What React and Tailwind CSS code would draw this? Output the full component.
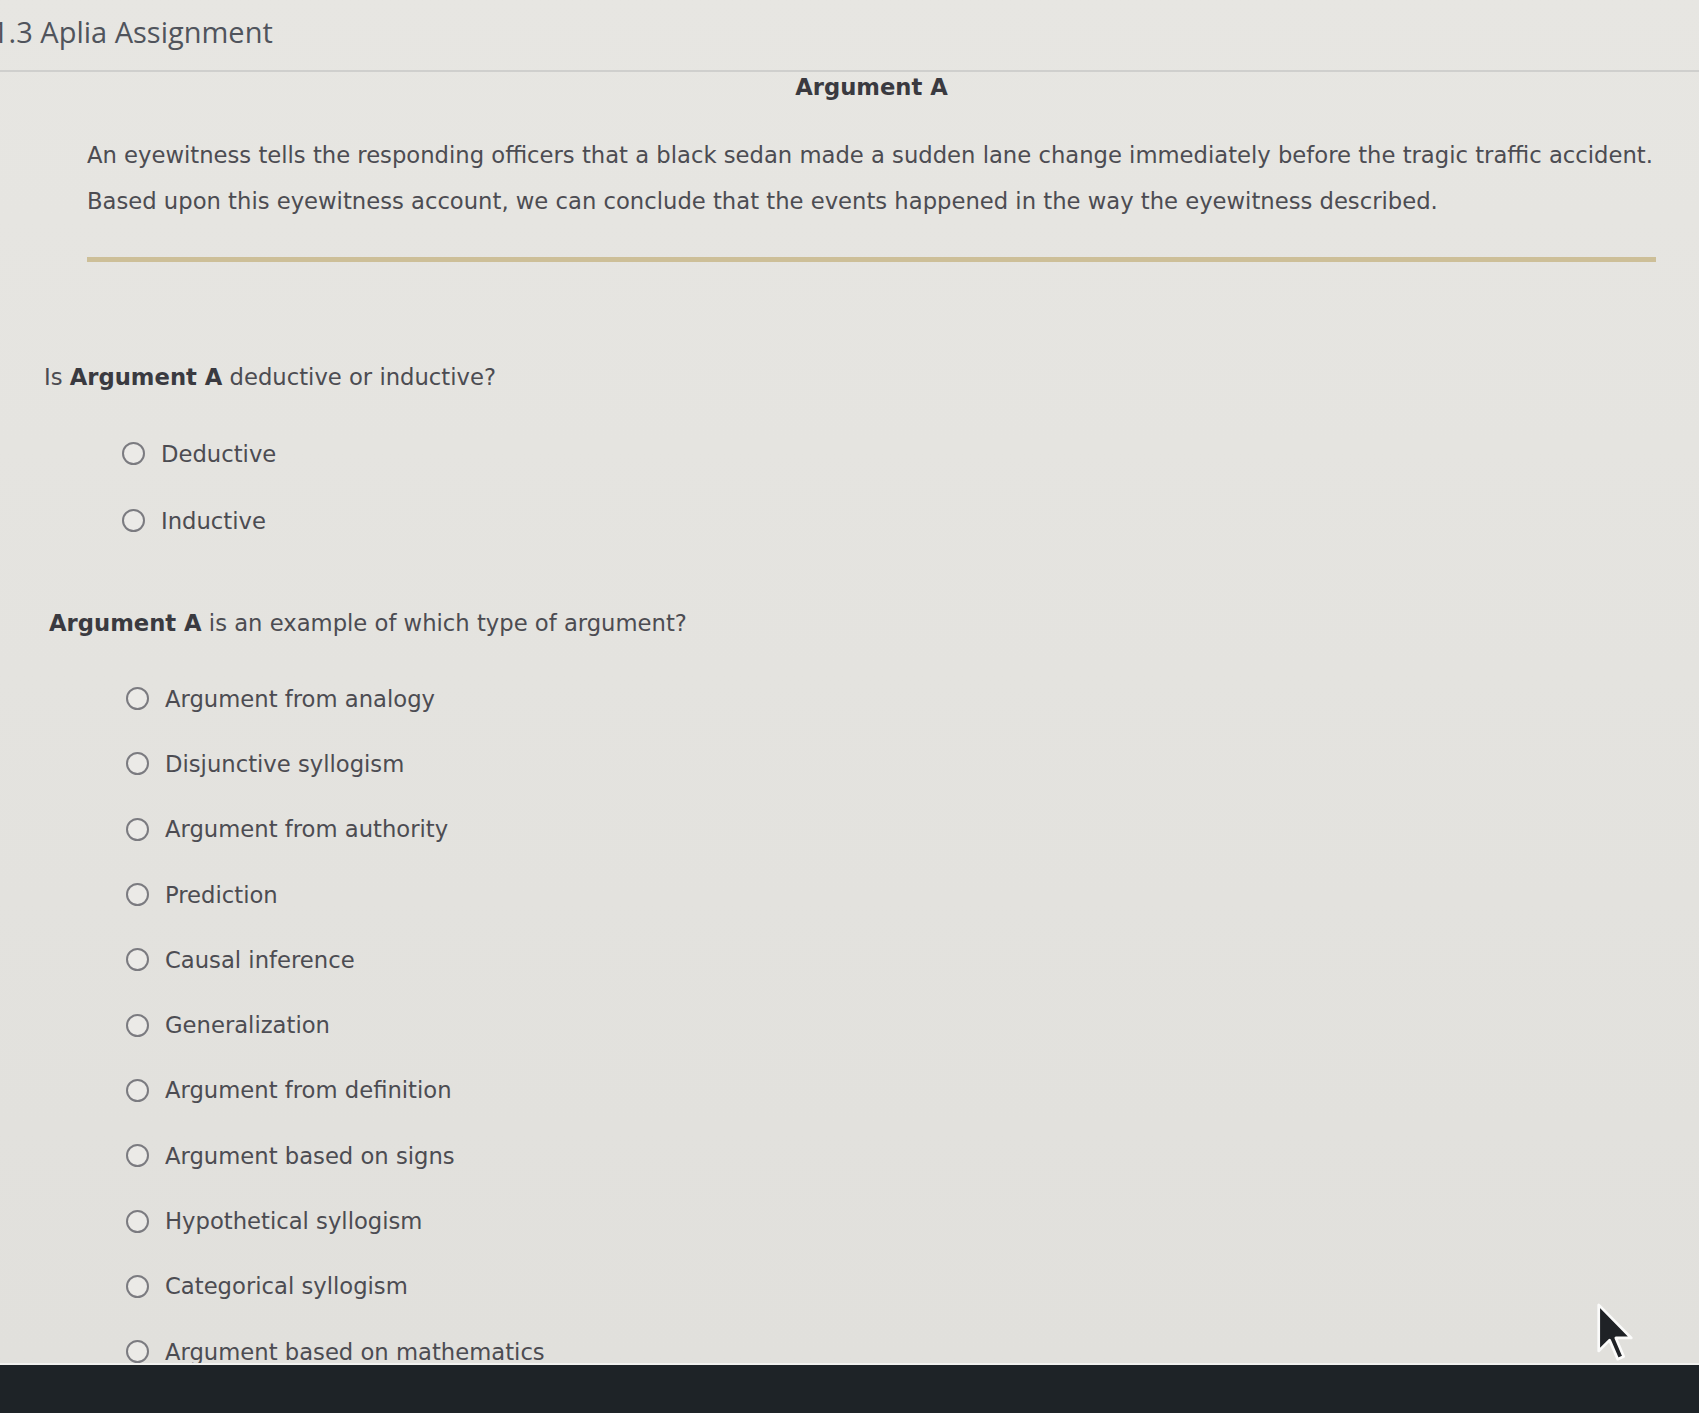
import React from "react";

const typeOptions = [
  "Argument from analogy",
  "Disjunctive syllogism",
  "Argument from authority",
  "Prediction",
  "Causal inference",
  "Generalization",
  "Argument from definition",
  "Argument based on signs",
  "Hypothetical syllogism",
  "Categorical syllogism",
  "Argument based on mathematics",
];

const Radio = () => (
  <span className="block w-[23px] h-[23px] rounded-full border-2 border-[#7b7b80] bg-[#ebeae7] shrink-0" />
);

const Cursor = () => (
  <svg width="38" height="60" viewBox="-1 -1 14 22" className="absolute left-[1596px] top-[1302px]">
    <path
      d="M0 0 L0 17 L4 13 L7 20 L9.2 19 L6.3 12.2 L12 12.2 Z"
      fill="#1f2226"
      stroke="#fbfbfa"
      strokeWidth="1"
      strokeLinejoin="round"
    />
  </svg>
);

export default function App() {
  return (
    <div className="relative w-[1699px] h-[1413px] overflow-hidden bg-[#e4e3df]">
      {/* page */}
      <div className="h-[1363px] overflow-hidden bg-gradient-to-b from-[#e7e6e2] to-[#e1e0dc] font-['DejaVu_Sans',sans-serif] text-[22.7px] text-[#4c4c52]">
        {/* Header */}
        <div className="h-[72px] border-b-2 border-[#cfcfcd] pt-[17px]">
          <h1 className="ml-[-8px] font-['Open_Sans',sans-serif] text-[29px] leading-[29px] text-[#50545c]">
            1.3 Aplia Assignment
          </h1>
        </div>

        {/* Passage */}
        <div className="ml-[87px] mr-[43px]">
          <div className="mt-[4px] text-center font-bold leading-[22px] text-[#3a3a40]">Argument A</div>
          <p className="mt-[34px] leading-[46px]">
            <span className="block whitespace-nowrap">
              An eyewitness tells the responding officers that a black sedan made a sudden lane change immediately before the tragic traffic accident.
            </span>
            <span className="block whitespace-nowrap">
              Based upon this eyewitness account, we can conclude that the events happened in the way the eyewitness described.
            </span>
          </p>
          <div className="mt-[33px] h-[5px] bg-[#cdbf98]" />
        </div>

        {/* Question 1 */}
        <div className="mt-[104px] pl-[44px] leading-[22px]">
          Is <b className="text-[#3a3a40]">Argument A</b> deductive or inductive?
        </div>
        <div className="mt-[32px]">
          {["Deductive", "Inductive"].map((opt) => (
            <div key={opt} className="h-[67px] pl-[122px] flex items-center gap-[16px] leading-[22px]">
              <Radio />
              <span>{opt}</span>
            </div>
          ))}
        </div>

        {/* Question 2 */}
        <div className="mt-[58px] pl-[49px] leading-[22px]">
          <b className="text-[#3a3a40]">Argument A</b> is an example of which type of argument?
        </div>
        <div className="mt-[32px]">
          {typeOptions.map((opt) => (
            <div key={opt} className="h-[65.3px] pl-[126px] flex items-center gap-[16px] leading-[22px]">
              <Radio />
              <span>{opt}</span>
            </div>
          ))}
        </div>
      </div>

      {/* screen edge */}
      <div className="h-[2px] bg-[#f1f1ef]" />
      <div className="h-[48px] bg-[#1e2327]" />

      <Cursor />
    </div>
  );
}
